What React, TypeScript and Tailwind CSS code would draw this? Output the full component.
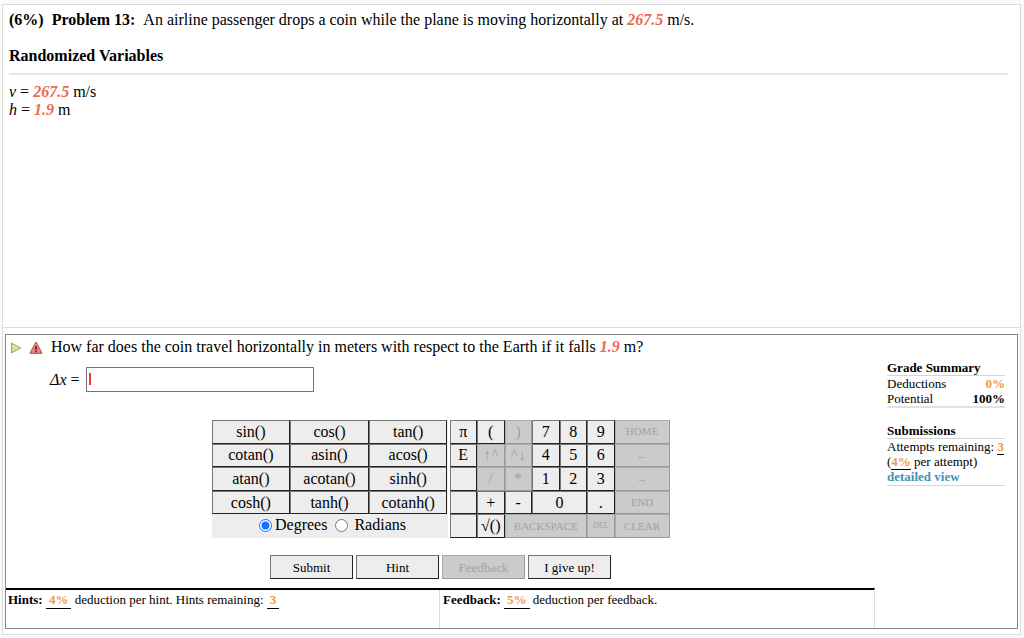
import { useState, type ReactNode } from "react";

const SERIF = "font-['Liberation_Serif',serif]";

const functionKeys = [
  "sin()", "cos()", "tan()",
  "cotan()", "asin()", "acos()",
  "atan()", "acotan()", "sinh()",
  "cosh()", "tanh()", "cotanh()",
];

type PadKey = { label: string; name?: string; off?: boolean; span?: 1 | 2 | 3; size?: "xs" | "sm" | "md" };

const padKeys: PadKey[] = [
  { label: "π" }, { label: "(" }, { label: ")", off: true }, { label: "7" }, { label: "8" }, { label: "9" },
  { label: "HOME", off: true, span: 2, size: "sm" },
  { label: "E" }, { label: "↑^", off: true, name: "Superscript" }, { label: "^↓", off: true, name: "Leave superscript" },
  { label: "4" }, { label: "5" }, { label: "6" },
  { label: "←", off: true, span: 2, size: "sm" },
  { label: "" }, { label: "/", off: true }, { label: "*", off: true }, { label: "1" }, { label: "2" }, { label: "3" },
  { label: "→", off: true, span: 2, size: "sm" },
  { label: "" }, { label: "+" }, { label: "-" }, { label: "0", span: 2 }, { label: "." },
  { label: "END", off: true, span: 2, size: "sm" },
  { label: "" }, { label: "√()" }, { label: "BACKSPACE", off: true, span: 3, size: "sm" },
  { label: "DEL", off: true, size: "xs" },
  { label: "CLEAR", off: true, span: 2, size: "sm" },
];

const spans = { 1: "col-span-1", 2: "col-span-2", 3: "col-span-3" };
const sizes = { xs: "text-[8px]", sm: "text-[11px]", md: "text-[16px]" };
const active = "bg-[#ededed] text-black border-t-[#777] border-l-[#777] border-r-[#222] border-b-[#222]";
const inactive = "bg-[#cbcbcb] text-[#a2a2a2] border-t-[#aaa] border-l-[#aaa] border-r-[#999] border-b-[#999]";

function Key({ label, name, off = false, span = 1, size = "md" }: PadKey) {
  return (
    <button
      type="button"
      disabled={off}
      aria-label={name}
      className={`flex min-w-0 items-center justify-center border leading-none whitespace-nowrap ${spans[span]} ${sizes[size]} ${off ? inactive : active}`}
    >
      {label}
    </button>
  );
}

function Value({ children }: { children: ReactNode }) {
  return <span className="font-bold italic text-[#ee6850]">{children}</span>;
}

function Underlined({ children }: { children: ReactNode }) {
  return <span className="border-b border-black px-[3px] pb-px font-bold text-[#f09a36]">{children}</span>;
}

function Action({ children, off = false }: { children: ReactNode; off?: boolean }) {
  return (
    <button
      type="button"
      disabled={off}
      className={`h-6 w-[83px] border text-[13px] leading-none ${off ? inactive : active}`}
    >
      {children}
    </button>
  );
}

function PlayIcon() {
  return (
    <svg width="12" height="12" viewBox="0 0 12 12" aria-hidden="true">
      <path d="M1.5 1.2 L10.6 6 L1.5 10.8 Z" fill="#cfe3a0" stroke="#9dba6a" strokeWidth="1.2" strokeLinejoin="round" />
      <path d="M2.8 3.1 L8 5.8" stroke="#ecf5d0" strokeWidth="0.8" />
    </svg>
  );
}

function WarningIcon() {
  return (
    <svg width="14" height="14" viewBox="0 0 14 14" aria-hidden="true">
      <path d="M7 1.8 L12.4 12 H1.6 Z" fill="#e27878" stroke="#cf6060" strokeWidth="2" strokeLinejoin="round" />
      <path d="M7 3 L11.2 11.2 H2.8 Z" fill="none" stroke="#efa6a6" strokeWidth="0.7" />
      <path d="M7 5 V8.8" stroke="#5c2020" strokeWidth="1.6" />
      <circle cx="7" cy="10.6" r="0.9" fill="#5c2020" />
    </svg>
  );
}

export default function App() {
  const [answer, setAnswer] = useState("");
  const [unit, setUnit] = useState("deg");

  return (
    <div className={`min-h-screen bg-[#fafafa] pt-1 pr-[3px] pb-[3px] pl-0.5 text-[16px] leading-[18px] text-black ${SERIF}`}>
      <main className="border border-[#dcdcdc] bg-white">
        <section className="min-h-[323px] border-b border-[#dcdcdc] px-1.5 pt-1.5 pr-3">
          <p>
            <strong>(6%)</strong>
            <strong className="mx-2">Problem 13:</strong>
            <span>
              An airline passenger drops a coin while the plane is moving horizontally at <Value>267.5</Value> m/s.
            </span>
          </p>
          <h2 className="mt-[18px] border-b-2 border-[#e6e6e6] pb-2 font-bold">Randomized Variables</h2>
          <p className="mt-2">
            <i>v</i> = <Value>267.5</Value> m/s
          </p>
          <p>
            <i>h</i> = <Value>1.9</Value> m
          </p>
        </section>

        <section className="mx-0.5 mt-1.5 mb-[5px] flex border border-[#858585]">
          <div className="flex min-w-0 flex-1 flex-col">
            <div className="flex items-center pt-[3px] pl-1">
              <span className="flex items-center gap-[7px] pt-0.5 pr-2">
                <PlayIcon />
                <WarningIcon />
              </span>
              <p>
                How far does the coin travel horizontally in meters with respect to the Earth if it falls{" "}
                <Value>1.9</Value> m?
              </p>
            </div>

            <div className="mt-[11px] flex items-center gap-1.5 pl-11">
              <label htmlFor="answer">
                <i>Δx</i> =
              </label>
              <div className="relative">
                <input
                  id="answer"
                  value={answer}
                  onChange={(e) => setAnswer(e.target.value)}
                  className="block h-[25px] w-[228px] border border-[#767676] bg-white px-1 caret-[#ff0000] outline-none"
                />
                {answer === "" && (
                  <svg
                    className="pointer-events-none absolute top-1.5 left-[3px]"
                    width="2"
                    height="12"
                    viewBox="0 0 2 12"
                    aria-hidden="true"
                  >
                    <rect width="2" height="12" fill="#f5392c" />
                  </svg>
                )}
              </div>
            </div>

            <div className="mt-7 flex justify-center gap-0.5">
              <div className="grid h-[118px] w-[236px] grid-cols-3 grid-rows-5 bg-[#ededed]">
                {functionKeys.map((k) => (
                  <Key key={k} label={k} />
                ))}
                <div className="col-span-3 flex items-center justify-center gap-2 pb-0.5 pl-1.5">
                  <label className="flex items-center gap-[3px]">
                    <input
                      type="radio"
                      name="angle"
                      checked={unit === "deg"}
                      onChange={() => setUnit("deg")}
                      className="size-[13px] accent-[#1a6dff]"
                    />
                    Degrees
                  </label>
                  <label className="flex items-center gap-1.5">
                    <input
                      type="radio"
                      name="angle"
                      checked={unit === "rad"}
                      onChange={() => setUnit("rad")}
                      className="size-[13px] accent-[#1a6dff]"
                    />
                    Radians
                  </label>
                </div>
              </div>
              <div className="grid h-[118px] w-[220px] grid-cols-8 grid-rows-5">
                {padKeys.map((k, i) => (
                  <Key key={i} {...k} />
                ))}
              </div>
            </div>

            <div className="mt-[17px] flex justify-center gap-[3px]">
              <Action>Submit</Action>
              <Action>Hint</Action>
              <Action off>Feedback</Action>
              <Action>I give up!</Action>
            </div>

            <div className="mt-[9px] grid min-h-10 flex-1 grid-cols-2 border-t-2 border-r border-t-black border-r-[#dcdcdc] text-[13px] leading-4">
              <p className="border-r border-[#dcdcdc] pt-0.5 pl-0.5">
                <strong>Hints:</strong> <Underlined>4%</Underlined> deduction per hint. Hints remaining:{" "}
                <Underlined>3</Underlined>
              </p>
              <p className="pt-0.5 pl-[3px]">
                <strong>Feedback:</strong> <Underlined>5%</Underlined> deduction per feedback.
              </p>
            </div>
          </div>

          <aside className="w-[142px] shrink-0 px-3 pt-[25px] text-[13px] leading-[15px]">
            <table className="w-full border-b-2 border-[#e2e2e2]">
              <caption className="border-b border-[#d4d4d4] text-left font-bold">Grade Summary</caption>
              <tbody>
                <tr>
                  <th className="text-left font-normal">Deductions</th>
                  <td className="text-right font-bold text-[#f09a36]">0%</td>
                </tr>
                <tr>
                  <th className="text-left font-normal">Potential</th>
                  <td className="text-right font-bold">100%</td>
                </tr>
              </tbody>
            </table>
            <h3 className="mt-[15px] border-b border-[#d4d4d4] font-bold">Submissions</h3>
            <div className="border-b border-[#d4d4d4] pb-px whitespace-nowrap">
              <p>
                Attempts remaining: <span className="border-b border-black font-bold text-[#f09a36]">3</span>
              </p>
              <p>
                (<span className="border-b border-black font-bold text-[#f09a36]">4%</span> per attempt)
              </p>
              <a href="#details" className="block font-bold text-[#4194b4]">
                detailed view
              </a>
            </div>
          </aside>
        </section>
      </main>
    </div>
  );
}
